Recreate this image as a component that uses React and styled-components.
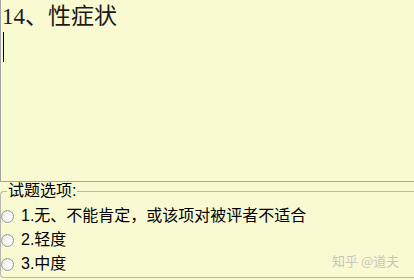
import React from 'react'
import styled, { createGlobalStyle } from 'styled-components'

const options = ['1.无、不能肯定，或该项对被评者不适合', '2.轻度', '3.中度']

function App() {
  return (
    <>
      <GlobalStyle />
      <SCPage>
        <SCEditor>
          <SCTitle>14、性症状</SCTitle>
          <SCCaret />
        </SCEditor>
        <SCFieldset>
          <SCLegend>试题选项:</SCLegend>
          {options.map((text) => (
            <SCOption key={text}>
              <SCRadio />
              <span>{text}</span>
            </SCOption>
          ))}
        </SCFieldset>
        <SCWatermark>知乎 @道夫</SCWatermark>
      </SCPage>
    </>
  )
}

export default App

const GlobalStyle = createGlobalStyle`
  html, body {
    margin: 0;
    padding: 0;
    background-color: #FAFAD2;
    overflow: hidden;
  }
`

const SCPage = styled.div`
  position: relative;
  width: 100%;
  height: 280px;
  background-color: #FAFAD2;
`

const SCEditor = styled.div`
  box-sizing: border-box;
  height: 182px;
  padding-top: 2px;
  border-left: 1px solid #a4a4a0;
  border-bottom: 1px solid #a4a4a0;
`

const SCTitle = styled.div`
  font-family: 'Liberation Serif', 'Noto Sans CJK SC', serif;
  font-size: 23px;
  line-height: 30px;
  color: #1a1a1a;
  padding-left: 1px;
  white-space: nowrap;
`

const SCCaret = styled.div`
  width: 1px;
  height: 30px;
  margin-left: 2px;
  background-color: #000;
`

/* the right edge of the box runs off the window in the screenshot */
const SCFieldset = styled.fieldset`
  box-sizing: border-box;
  width: 100%;
  min-width: 0;
  margin: 1px 0 0 0;
  padding: 5px 0 0 0;
  height: 95px;
  border: 1px solid #b8b8b0;
  border-right: none;
  border-radius: 4px 0 0 4px;
`

const SCLegend = styled.legend`
  margin-left: 6px;
  padding: 0 1px;
  font-family: 'Liberation Sans', 'Noto Sans CJK SC', sans-serif;
  font-size: 16px;
  line-height: 16px;
  color: #000;
`

const SCOption = styled.div`
  display: flex;
  align-items: center;
  gap: 7px;
  height: 24px;
  font-family: 'Liberation Sans', 'Noto Sans CJK SC', sans-serif;
  font-size: 16px;
  line-height: 24px;
  color: #000;
  white-space: nowrap;
`

const SCRadio = styled.span`
  box-sizing: border-box;
  width: 13px;
  height: 13px;
  border-radius: 50%;
  border: 1px solid #9a9a98;
  background: radial-gradient(circle at 60% 60%, #ffffff 0%, #f2f2f0 50%, #d8d8d4 100%);
  flex-shrink: 0;
`

const SCWatermark = styled.div`
  position: absolute;
  left: 332px;
  top: 253px;
  font-family: 'Noto Sans CJK SC', sans-serif;
  font-size: 13px;
  line-height: 16px;
  color: #c6c6bc;
  white-space: nowrap;
`
